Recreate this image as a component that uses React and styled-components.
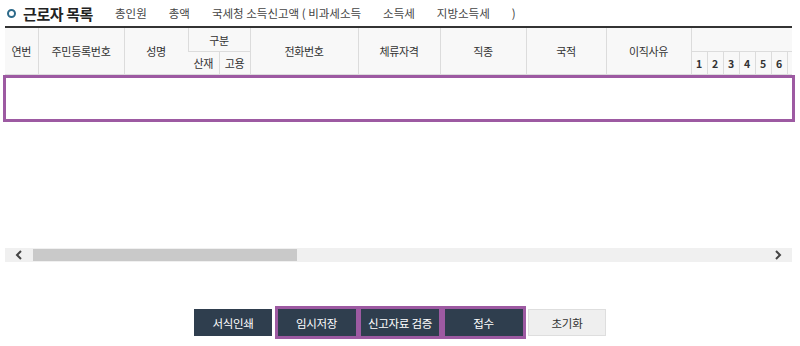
import React from 'react';
import styled, { createGlobalStyle } from 'styled-components';

const Global = createGlobalStyle`
  html, body {
    margin: 0;
    padding: 0;
    background: #fff;
    font-family: "Noto Sans CJK KR", "Noto Sans", sans-serif;
    color: #333;
  }
`;

const Page = styled.div`
  width: 800px;
  height: 346px;
  padding-left: 5px;
  box-sizing: border-box;
  overflow: hidden;
`;

const TitleBar = styled.div`
  display: flex;
  align-items: center;
  gap: 22px;
  height: 26px;
  white-space: nowrap;
`;

const Title = styled.h2`
  display: flex;
  align-items: center;
  gap: 7px;
  margin: 0;
  font-size: 15px;
  font-weight: 700;
  letter-spacing: -0.4px;
  color: #222;
`;

const Ring = styled.span`
  width: 5px;
  height: 5px;
  border: 2px solid #2d6a8a;
  border-radius: 50%;
  margin-left: 2px;
`;

const Info = styled.span`
  font-size: 11.5px;
  color: #444;
`;

const TableWrap = styled.div`
  width: 787px;
  overflow: hidden;
  border-top: 2px solid #333;
`;

const Table = styled.table`
  border-collapse: collapse;
  table-layout: fixed;
  width: ${p => p.$width}px;
  background: #f8f8f8;
`;

const Th = styled.th`
  border-left: 1px solid #dcdcdc;
  border-bottom: 1px solid #dcdcdc;
  font-size: ${p => (p.$num ? 10.5 : 11)}px;
  font-weight: ${p => (p.$num ? 700 : 400)};
  color: #333;
  height: ${p => p.$h || 24}px;
  padding: 0;
  text-align: center;
  letter-spacing: -0.3px;
  &:first-child {
    border-left: none;
  }
`;

const HighlightRow = styled.div`
  margin-left: -2px;
  width: 792px;
  height: 47px;
  box-sizing: border-box;
  border: 3px solid #9d5aa2;
`;

const Spacer = styled.div`
  height: 126px;
`;

const Scrollbar = styled.div`
  display: flex;
  align-items: center;
  width: 787px;
  height: 14px;
  background: #f0f0f0;
`;

const Arrow = styled.span`
  width: 28px;
  display: flex;
  justify-content: center;
  color: #444;
`;

const Track = styled.div`
  flex: 1;
  height: 12px;
`;

const Thumb = styled.div`
  width: 264px;
  height: 12px;
  background: #c9c9c9;
`;

const Buttons = styled.div`
  display: flex;
  justify-content: center;
  gap: 5.5px;
  margin-top: 47px;
  margin-left: -5px;
`;

const Button = styled.button`
  width: 78px;
  height: 27px;
  border: none;
  font-family: inherit;
  font-size: 11.5px;
  letter-spacing: -0.3px;
  background: ${p => (p.$light ? '#efefef' : '#2f3e4e')};
  color: ${p => (p.$light ? '#333' : '#fff')};
  box-shadow: ${p => (p.$light ? 'inset 0 0 0 1px #dedede' : 'none')};
  outline: ${p => (p.$marked ? '3px solid #9d5aa2' : 'none')};
  padding: 0;
`;

const Chevron = ({ dir }) => (
  <svg width="8" height="10" viewBox="0 0 8 10">
    <path
      d={dir === 'left' ? 'M6 1 L2 5 L6 9' : 'M2 1 L6 5 L2 9'}
      fill="none"
      stroke="#444"
      strokeWidth="2"
    />
  </svg>
);

const cols = [33, 86, 64, 31, 31, 108, 82, 86, 80, 85];
const nums = Array.from({ length: 7 }, (_, i) => i + 1);

export default function App() {
  const width = cols.reduce((a, b) => a + b, 0) + nums.length * 16;
  return (
    <Page>
      <Global />
      <TitleBar>
        <Title><Ring />근로자 목록</Title>
        <Info>총인원</Info>
        <Info>총액</Info>
        <Info>국세청 소득신고액 ( 비과세소득</Info>
        <Info>소득세</Info>
        <Info>지방소득세</Info>
        <Info>)</Info>
      </TitleBar>
      <TableWrap>
        <Table $width={width}>
          <colgroup>
            {cols.map((w, i) => <col key={i} style={{ width: w }} />)}
            {nums.map(n => <col key={'n' + n} style={{ width: 16 }} />)}
          </colgroup>
          <thead>
            <tr>
              <Th rowSpan={2}>연번</Th>
              <Th rowSpan={2}>주민등록번호</Th>
              <Th rowSpan={2}>성명</Th>
              <Th colSpan={2} $h={23}>구분</Th>
              <Th rowSpan={2}>전화번호</Th>
              <Th rowSpan={2}>체류자격</Th>
              <Th rowSpan={2}>직종</Th>
              <Th rowSpan={2}>국적</Th>
              <Th rowSpan={2}>이직사유</Th>
              <Th colSpan={nums.length} $h={23}></Th>
            </tr>
            <tr>
              <Th $h={22}>산재</Th>
              <Th $h={22}>고용</Th>
              {nums.map(n => <Th key={n} $num $h={22}>{n}</Th>)}
            </tr>
          </thead>
        </Table>
      </TableWrap>
      <HighlightRow />
      <Spacer />
      <Scrollbar>
        <Arrow><Chevron dir="left" /></Arrow>
        <Track><Thumb /></Track>
        <Arrow><Chevron dir="right" /></Arrow>
      </Scrollbar>
      <Buttons>
        <Button>서식인쇄</Button>
        <Button $marked>임시저장</Button>
        <Button $marked>신고자료 검증</Button>
        <Button $marked>접수</Button>
        <Button $light>초기화</Button>
      </Buttons>
    </Page>
  );
}
